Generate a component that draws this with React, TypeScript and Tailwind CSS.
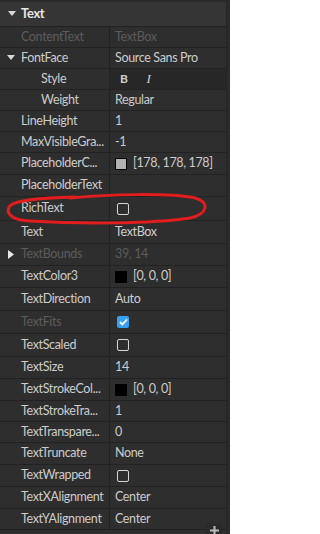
import React from "react"

type Kind = "text" | "check" | "checked" | "color" | "style" | "none"

interface Prop {
  label: string
  value?: string
  kind?: Kind
  swatch?: string
  indent?: boolean
  dim?: boolean
  arrow?: "down" | "right"
  h: string
}

const props: Prop[] = [
  { label: "ContentText", value: "TextBox", dim: true, h: "h-[21px]" },
  { label: "FontFace", value: "Source Sans Pro", arrow: "down", h: "h-[21px]" },
  { label: "Style", kind: "style", indent: true, h: "h-[21px]" },
  { label: "Weight", value: "Regular", indent: true, h: "h-[21px]" },
  { label: "LineHeight", value: "1", h: "h-[21px]" },
  { label: "MaxVisibleGra...", value: "-1", h: "h-[21px]" },
  { label: "PlaceholderC...", value: "[178, 178, 178]", kind: "color", swatch: "bg-[#b2b2b2]", h: "h-[22px]" },
  { label: "PlaceholderText", kind: "none", h: "h-[22px]" },
  { label: "RichText", kind: "check", h: "h-[24px]" },
  { label: "Text", value: "TextBox", h: "h-[23px]" },
  { label: "TextBounds", value: "39, 14", dim: true, arrow: "right", h: "h-[22px]" },
  { label: "TextColor3", value: "[0, 0, 0]", kind: "color", swatch: "bg-black", h: "h-[22px]" },
  { label: "TextDirection", value: "Auto", h: "h-[23px]" },
  { label: "TextFits", kind: "checked", dim: true, h: "h-[23px]" },
  { label: "TextScaled", kind: "check", h: "h-[23px]" },
  { label: "TextSize", value: "14", h: "h-[22px]" },
  { label: "TextStrokeCol...", value: "[0, 0, 0]", kind: "color", swatch: "bg-black", h: "h-[22px]" },
  { label: "TextStrokeTra...", value: "1", h: "h-[21px]" },
  { label: "TextTranspare...", value: "0", h: "h-[21px]" },
  { label: "TextTruncate", value: "None", h: "h-[22px]" },
  { label: "TextWrapped", kind: "check", h: "h-[22px]" },
  { label: "TextXAlignment", value: "Center", h: "h-[22px]" },
  { label: "TextYAlignment", value: "Center", h: "h-[21px]" },
]

function Caret({ dir }: { dir: "down" | "right" }) {
  return dir === "down" ? (
    <svg width="8" height="6" viewBox="0 0 8 6" className="fill-[#d8d8d8]">
      <path d="M0 0h8L4 5z" />
    </svg>
  ) : (
    <svg width="6" height="9" viewBox="0 0 6 9" className="fill-[#e8e8e8]">
      <path d="M0 0l6 4.5L0 9z" />
    </svg>
  )
}

function Value({ p }: { p: Prop }) {
  const kind = p.kind ?? "text"
  if (kind === "style") {
    return (
      <div className="flex h-full items-center gap-[19px] bg-[#272727] pl-[10px] text-[#cfcfcf]">
        <span className="font-bold text-[12px]">B</span>
        <span className="italic text-[13px] font-['Liberation_Serif',serif]">I</span>
      </div>
    )
  }
  if (kind === "check") {
    return (
      <div className="flex h-full items-center pl-[7px]">
        <div className="h-[12px] w-[12px] rounded-[2px] border border-[#d6d6d6]" />
      </div>
    )
  }
  if (kind === "checked") {
    return (
      <div className="flex h-full items-center pl-[7px]">
        <div className="flex h-[12px] w-[12px] items-center justify-center rounded-[2px] bg-[#36a1f4]">
          <svg width="9" height="8" viewBox="0 0 9 8" fill="none" stroke="white" strokeWidth="1.8">
            <path d="M1 4l2.4 2.4L8 1.5" />
          </svg>
        </div>
      </div>
    )
  }
  if (kind === "color") {
    return (
      <div className="flex h-full items-center gap-[6px] pl-[5px] text-[#cccccc]">
        <div className={`h-[12px] w-[12px] border border-black ${p.swatch}`} />
        <span>{p.value}</span>
      </div>
    )
  }
  if (kind === "none") return <div className="h-full" />
  return (
    <div className={`flex h-full items-center pl-[5px] ${p.dim ? "text-[#5c5c5c]" : "text-[#cccccc]"}`}>
      {p.value}
    </div>
  )
}

export default function App() {
  return (
    <div className="relative flex h-[534px] w-[230px] overflow-hidden bg-[#2e2e2e] font-['Lato',sans-serif] text-[12.5px] tracking-[-0.35px]">
      <div className="flex w-[226px] flex-col">
        {/* tail of the section above */}
        <div className="grid h-[2px] grid-cols-[110px_1fr] bg-[#2b2b2b]">
          <div className="border-r border-[#222222]" />
          <div />
        </div>
        <div className="flex h-[25px] items-center border-b border-[#222222] bg-[#353535]">
          <div className="flex w-[21px] justify-center pl-[2px]">
            <Caret dir="down" />
          </div>
          <span className="font-bold text-[13px] text-[#e6e6e6]">Text</span>
        </div>
        {props.map((p) => (
          <div key={p.label} className={`grid shrink-0 grid-cols-[110px_1fr] border-b border-[#222222] ${p.h}`}>
            <div className="flex items-center border-r border-[#222222]">
              <div className="flex w-[21px] shrink-0 justify-center pl-[1px]">
                {p.arrow && <Caret dir={p.arrow} />}
              </div>
              <span
                className={`whitespace-nowrap ${p.indent ? "pl-[20px]" : ""} ${p.dim ? "text-[#5c5c5c]" : "text-[#cccccc]"}`}
              >
                {p.label}
              </span>
            </div>
            <Value p={p} />
          </div>
        ))}
        <div className="flex-1" />
      </div>
      <div className="w-[4px] border-l border-[#242424] bg-[#2b2b2b]" />

      {/* add button in the corner */}
      <div className="absolute bottom-0 left-[206px] flex h-[11px] w-[16px] items-start justify-center bg-[#2a2a2a] pt-[3px]">
        <svg width="9" height="9" viewBox="0 0 9 9" className="fill-[#bdbdbd]">
          <path d="M3.5 0h2v3.5H9v2H5.5V9h-2V5.5H0v-2h3.5z" />
        </svg>
      </div>

      {/* red hand-drawn mark round RichText */}
      <svg
        className="pointer-events-none absolute left-0 top-[190px]"
        width="230"
        height="40"
        viewBox="0 0 230 40"
        fill="none"
      >
        <path
          d="M70 8 C110 4 170 3 195 8 C210 12 208 24 190 28 C150 34 80 34 30 31 C12 30 6 24 9 17 C13 10 40 8 75 7"
          stroke="#e11d1d"
          strokeWidth="3"
          strokeLinecap="round"
        />
      </svg>
    </div>
  )
}
